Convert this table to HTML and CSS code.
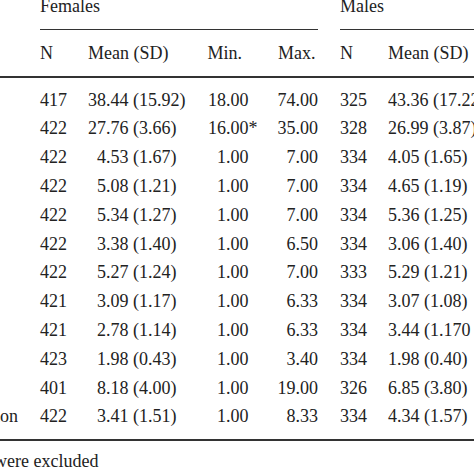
FILE: index.html
```html
<!DOCTYPE html>
<html>
<head>
<meta charset="utf-8">
<link rel="stylesheet" href="styles.css">
</head>
<body>
<div class="page">
<table class="stats">
  <colgroup>
    <col class="c-label">
    <col class="c-n">
    <col class="c-mean">
    <col class="c-sd">
    <col class="c-min">
    <col class="c-max">
    <col class="c-gap">
    <col class="c-n">
    <col class="c-mm">
  </colgroup>
  <thead>
    <tr class="group">
      <th></th>
      <th colspan="5" class="grp">Females</th>
      <th></th>
      <th colspan="2" class="grp">Males</th>
    </tr>
    <tr class="cols">
      <th></th>
      <th>N</th>
      <th colspan="2">Mean (SD)</th>
      <th>Min.</th>
      <th class="hmax">Max.</th>
      <th></th>
      <th>N</th>
      <th>Mean (SD)</th>
    </tr>
  </thead>
  <tbody>
    <tr class="first"><td class="lbl">Age</td><td>417</td><td class="m">38.44</td><td class="sd">(15.92)</td><td class="r">18.00</td><td class="r">74.00</td><td></td><td>325</td><td>43.36 (17.22)</td></tr>
    <tr><td class="lbl">BMI</td><td>422</td><td class="m">27.76</td><td class="sd">(3.66)</td><td class="r">16.00<span class="fn">*</span></td><td class="r">35.00</td><td></td><td>328</td><td>26.99 (3.87)</td></tr>
    <tr><td class="lbl"></td><td>422</td><td class="m">4.53</td><td class="sd">(1.67)</td><td class="r">1.00</td><td class="r">7.00</td><td></td><td>334</td><td>4.05 (1.65)</td></tr>
    <tr><td class="lbl"></td><td>422</td><td class="m">5.08</td><td class="sd">(1.21)</td><td class="r">1.00</td><td class="r">7.00</td><td></td><td>334</td><td>4.65 (1.19)</td></tr>
    <tr><td class="lbl"></td><td>422</td><td class="m">5.34</td><td class="sd">(1.27)</td><td class="r">1.00</td><td class="r">7.00</td><td></td><td>334</td><td>5.36 (1.25)</td></tr>
    <tr><td class="lbl"></td><td>422</td><td class="m">3.38</td><td class="sd">(1.40)</td><td class="r">1.00</td><td class="r">6.50</td><td></td><td>334</td><td>3.06 (1.40)</td></tr>
    <tr><td class="lbl"></td><td>422</td><td class="m">5.27</td><td class="sd">(1.24)</td><td class="r">1.00</td><td class="r">7.00</td><td></td><td>333</td><td>5.29 (1.21)</td></tr>
    <tr><td class="lbl"></td><td>421</td><td class="m">3.09</td><td class="sd">(1.17)</td><td class="r">1.00</td><td class="r">6.33</td><td></td><td>334</td><td>3.07 (1.08)</td></tr>
    <tr><td class="lbl"></td><td>421</td><td class="m">2.78</td><td class="sd">(1.14)</td><td class="r">1.00</td><td class="r">6.33</td><td></td><td>334</td><td>3.44 (1.170</td></tr>
    <tr><td class="lbl"></td><td>423</td><td class="m">1.98</td><td class="sd">(0.43)</td><td class="r">1.00</td><td class="r">3.40</td><td></td><td>334</td><td>1.98 (0.40)</td></tr>
    <tr><td class="lbl"></td><td>401</td><td class="m">8.18</td><td class="sd">(4.00)</td><td class="r">1.00</td><td class="r">19.00</td><td></td><td>326</td><td>6.85 (3.80)</td></tr>
    <tr class="last"><td class="lbl">Suppression</td><td>422</td><td class="m">3.41</td><td class="sd">(1.51)</td><td class="r">1.00</td><td class="r">8.33</td><td></td><td>334</td><td>4.34 (1.57)</td></tr>
  </tbody>
</table>
<p class="note">were excluded</p>
</div>
</body>
</html>
```

FILE: styles.css
```css
html, body {
  margin: 0;
  padding: 0;
  background: #fff;
  overflow: hidden;
}
.page {
  width: 474px;
  height: 474px;
  overflow: hidden;
  font-family: "Liberation Serif", "Times New Roman", serif;
  font-size: 18px;
  color: #222;
}
.stats {
  border-collapse: collapse;
  border-spacing: 0;
  table-layout: fixed;
  width: 700px;
  margin-top: -8px;
  margin-left: -70px;
}
.stats th, .stats td {
  padding: 0;
  line-height: 28.8px;
  font-weight: normal;
  text-align: left;
  white-space: nowrap;
  vertical-align: top;
}
.c-label { width: 110px; }
.c-n { width: 48px; }
.c-mean { width: 40.5px; }
.c-sd { width: 79px; }
.c-min { width: 41px; }
.c-max { width: 69.5px; }
.c-gap { width: 22px; }
.c-mm { width: 242px; }

.group th { padding-bottom: 8px; }
.group th.grp { border-bottom: 1px solid #333; }
.cols th {
  padding-top: 9px;
  padding-bottom: 8px;
  border-bottom: 2px solid #333;
}
.cols th.hmax { padding-left: 29.5px; }
.first td { padding-top: 8px; }
.last td {
  padding-bottom: 8px;
  border-bottom: 2px solid #333;
}
.stats td.m { text-align: right; }
.stats td.sd { padding-left: 4.5px; }
.stats td.r { text-align: right; }
.fn { margin-right: -9px; }
.lbl { overflow: visible; }
.note {
  margin: 6px 0 0 -6px;
  line-height: 28.8px;
}
```
